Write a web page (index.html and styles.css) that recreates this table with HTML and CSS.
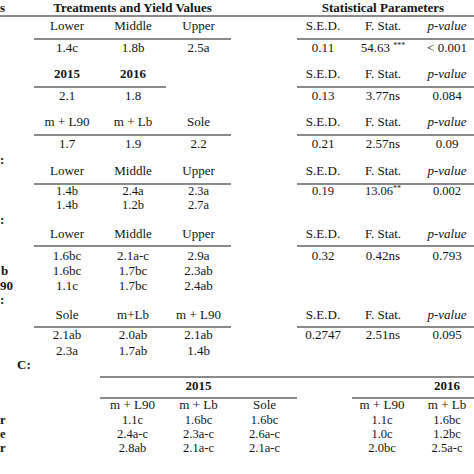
FILE: index.html
```html
<!DOCTYPE html>
<html>
<head>
<meta charset="utf-8">
<link rel="stylesheet" href="styles.css">
</head>
<body>
<div class="page">
  <div class="row title">
    <div class="lab lab-s">s</div>
    <div class="span3 b">Treatments and Yield Values</div>
    <div></div>
    <div class="span3 b stat-title">Statistical Parameters</div>
  </div>

  <!-- section 1 -->
  <div class="row head">
    <div></div>
    <div class="c">Lower</div><div class="c">Middle</div><div class="c">Upper</div>
    <div></div>
    <div class="c">S.E.D.</div><div class="c">F. Stat.</div><div class="c"><i>p-value</i></div>
  </div>
  <div class="row data first">
    <div></div><div>1.4c</div><div>1.8b</div><div>2.5a</div><div></div>
    <div>0.11</div><div>54.63 <sup>***</sup></div><div>&lt; 0.001</div>
  </div>

  <!-- section 2 -->
  <div class="row head sp8">
    <div></div>
    <div class="c b">2015</div><div class="c b">2016</div><div></div>
    <div></div>
    <div class="c">S.E.D.</div><div class="c">F. Stat.</div><div class="c"><i>p-value</i></div>
  </div>
  <div class="row data first">
    <div></div><div>2.1</div><div>1.8</div><div></div><div></div>
    <div>0.13</div><div>3.77ns</div><div>0.084</div>
  </div>

  <!-- section 3 -->
  <div class="row head sp8">
    <div></div>
    <div class="c">m + L90</div><div class="c">m + Lb</div><div class="c">Sole</div>
    <div></div>
    <div class="c">S.E.D.</div><div class="c">F. Stat.</div><div class="c"><i>p-value</i></div>
  </div>
  <div class="row data first">
    <div></div><div>1.7</div><div>1.9</div><div>2.2</div><div></div>
    <div>0.21</div><div>2.57ns</div><div>0.09</div>
  </div>

  <!-- section 4 -->
  <div class="row labrow l9"><div class="lab">:</div></div>
  <div class="row head">
    <div></div>
    <div class="c">Lower</div><div class="c">Middle</div><div class="c">Upper</div>
    <div></div>
    <div class="c">S.E.D.</div><div class="c">F. Stat.</div><div class="c"><i>p-value</i></div>
  </div>
  <div class="block pt2">
    <div class="row data tight">
      <div></div><div>1.4b</div><div>2.4a</div><div>2.3a</div><div></div>
      <div>0.19</div><div>13.06<sup>**</sup></div><div>0.002</div>
    </div>
    <div class="row data tight">
      <div></div><div>1.4b</div><div>1.2b</div><div>2.7a</div>
    </div>
  </div>

  <!-- section 5 -->
  <div class="row labrow l14"><div class="lab">:</div></div>
  <div class="row head h18">
    <div></div>
    <div class="c">Lower</div><div class="c">Middle</div><div class="c">Upper</div>
    <div></div>
    <div class="c">S.E.D.</div><div class="c">F. Stat.</div><div class="c"><i>p-value</i></div>
  </div>
  <div class="block pt4">
    <div class="row data r15">
      <div></div><div>1.6bc</div><div>2.1a-c</div><div>2.9a</div><div></div>
      <div>0.32</div><div>0.42ns</div><div>0.793</div>
    </div>
    <div class="row data r15">
      <div class="lab lab-b">b</div><div>1.6bc</div><div>1.7bc</div><div>2.3ab</div>
    </div>
    <div class="row data r15">
      <div class="lab">90</div><div>1.1c</div><div>1.7bc</div><div>2.4ab</div>
    </div>
  </div>

  <!-- section 6 -->
  <div class="row labrow l13"><div class="lab">:</div></div>
  <div class="row head h19">
    <div></div>
    <div class="c">Sole</div><div class="c">m+Lb</div><div class="c">m + L90</div>
    <div></div>
    <div class="c">S.E.D.</div><div class="c">F. Stat.</div><div class="c"><i>p-value</i></div>
  </div>
  <div class="block pt2">
    <div class="row data r16">
      <div></div><div>2.1ab</div><div>2.0ab</div><div>2.1ab</div><div></div>
      <div>0.2747</div><div>2.51ns</div><div>0.095</div>
    </div>
    <div class="row data r16">
      <div></div><div>2.3a</div><div>1.7ab</div><div>1.4b</div>
    </div>
  </div>

  <!-- section 7 -->
  <div class="crow"><span class="lab lab-c">C:</span></div>
  <div class="row2 years">
    <div></div>
    <div class="span3 c b">2015</div>
    <div class="gap"></div>
    <div class="span3 c b">2016</div>
  </div>
  <div class="row2 head2">
    <div></div>
    <div>m + L90</div><div>m + Lb</div><div>Sole</div><div></div>
    <div>m + L90</div><div>m + Lb</div><div></div>
  </div>
  <div class="row2 dtight">
    <div class="lab">r</div><div>1.1c</div><div>1.6bc</div><div>1.6bc</div><div></div>
    <div>1.1c</div><div>1.6bc</div><div></div>
  </div>
  <div class="row2 dtight">
    <div class="lab">e</div><div>2.4a-c</div><div>2.3a-c</div><div>2.6a-c</div><div></div>
    <div>1.0c</div><div>1.2bc</div><div></div>
  </div>
  <div class="row2 dtight">
    <div class="lab">r</div><div>2.8ab</div><div>2.1a-c</div><div>2.1a-c</div><div></div>
    <div>2.0bc</div><div>2.5a-c</div><div></div>
  </div>
</div>
</body>
</html>
```

FILE: styles.css
```css
html, body {
  margin: 0;
  padding: 0;
  background: #ffffff;
}
.page {
  width: 474px;
  height: 474px;
  overflow: hidden;
  font-family: "Liberation Serif", "Times New Roman", serif;
  font-size: 13px;
  color: #141414;
}
.row {
  display: grid;
  grid-template-columns: 34px 66px 66px 65px 66px 52px 68px 60px;
  width: 477px;
  align-items: center;
  text-align: center;
  white-space: nowrap;
}
.row > div { line-height: 14px; }
.b { font-weight: bold; }
.span3 { grid-column: span 3; }
.lab {
  text-align: left;
  font-weight: bold;
}
.lab-b { padding-left: 1px; }
.title {
  height: 15px;
  border-bottom: 2px solid #8a8a8a;
}
.title > div { line-height: 13px; }
.stat-title { padding-right: 8px; }
.head { height: 20px; }
.head .c {
  height: 100%;
  line-height: 20px;
  border-bottom: 2px solid #8a8a8a;
}
.h18 { height: 18px; }
.h18 .c { line-height: 18px; }
.h19 { height: 19px; }
.h19 .c { line-height: 19px; }
.sp8 { margin-top: 7px; }
.data.first { height: 21px; }
.tight {
  height: 14px;
  font-size: 12.5px;
}
.tight > div { line-height: 14px; }
.r15 { height: 15px; }
.r16 { height: 16px; }
.pt4 { padding-top: 4px; }
.pt2 { padding-top: 2px; }
.labrow { align-items: end; }
.l9 { height: 8px; }
.l14 { height: 14px; }
.l13 { height: 13px; }
.labrow .lab { line-height: 12px; }
sup {
  font-size: 8px;
  vertical-align: 4px;
  line-height: 0;
}
.crow {
  height: 17px;
  line-height: 11px;
}
.lab-c { padding-left: 17px; }
.row2 {
  display: grid;
  grid-template-columns: 100px 65px 67px 65px 55px 60px 70px 60px;
  width: 542px;
  align-items: center;
  text-align: center;
  white-space: nowrap;
}
.years {
  height: 18px;
  margin-left: 100px;
  grid-template-columns: 0 65px 67px 65px 55px 60px 70px 60px;
  border-top: 2px solid #8a8a8a;
}
.years .c {
  height: 100%;
  line-height: 18px;
  border-bottom: 2px solid #8a8a8a;
}
.head2 { height: 17px; }
.head2 > div { line-height: 17px; }
.dtight {
  height: 14px;
  font-size: 12.5px;
}
.dtight > div { line-height: 14px; }
```
